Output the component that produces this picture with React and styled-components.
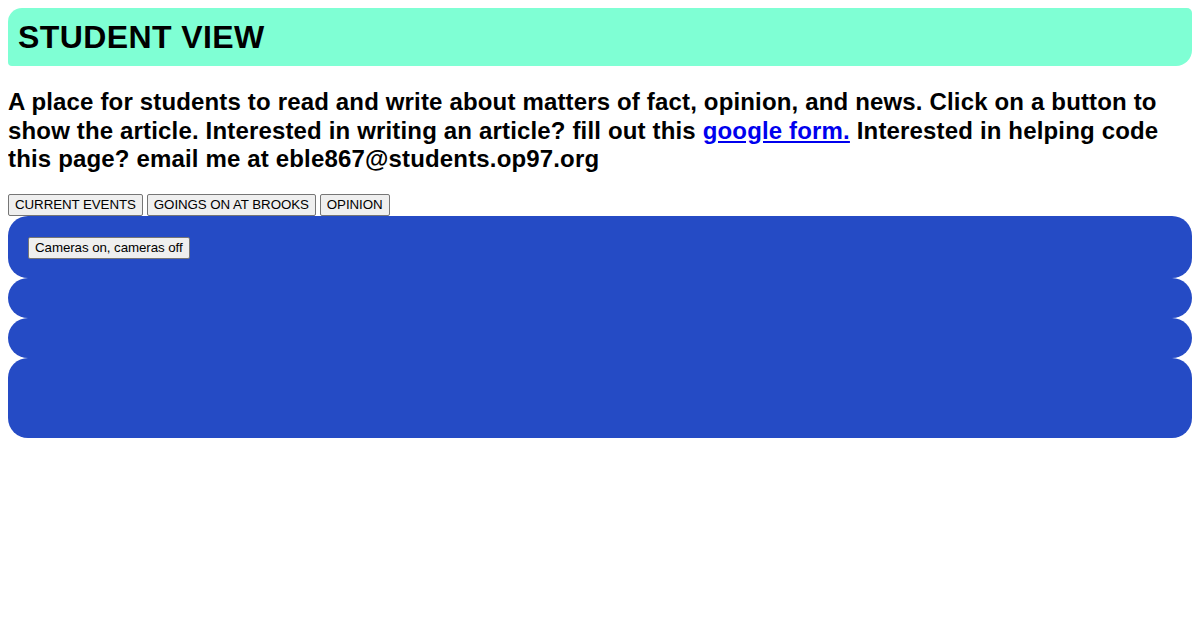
import React, { useState } from 'react'
import styled, { createGlobalStyle } from 'styled-components'

const GlobalStyle = createGlobalStyle`
    body {
        margin: 8px;
        background-color: #FFFFFF;
        font-family: "Liberation Sans", Arial, sans-serif;
        color: #000000;
    }
`

const Header = styled.div`
    background-color: aquamarine;
    border-radius: 14px 5px 16px 4px;
    padding: 10px 10px;
`

const Title = styled.h1`
    margin: 0;
    font-size: 32px;
    font-weight: 700;
    line-height: 38px;
    letter-spacing: 0.4px;
`

const Intro = styled.h2`
    margin: 22px 0 20px;
    font-size: 24px;
    font-weight: 700;
    line-height: 28.5px;
    letter-spacing: 0.16px;

    a {
        color: #0000EE;
        text-decoration: underline;
    }
`

const Tabs = styled.div`
    display: flex;
    gap: 4px;
`

const Button = styled.button`
    font-family: "Liberation Sans", Arial, sans-serif;
    font-size: 13.333px;
    line-height: 16px;
    letter-spacing: -0.08px;
    padding: 2px 6px;
    background-color: #EFEFEF;
    border: 1px solid #767676;
    border-radius: 2px;
    color: #000000;
    cursor: pointer;
`

const Panel = styled.div`
    background-color: #254BC5;
    border-radius: 20px;
    padding: 21px 20px 0;
    height: ${(props) => props.$height}px;
    box-sizing: border-box;
`

const sections = [
    { name: 'CURRENT EVENTS', articles: ['Cameras on, cameras off'] },
    { name: 'GOINGS ON AT BROOKS', articles: [] },
    { name: 'OPINION', articles: [] },
]

const App = () => {
    const [open, setOpen] = useState(0)

    return (
        <>
            <GlobalStyle />
            <Header>
                <Title>STUDENT VIEW</Title>
            </Header>
            <Intro>
                A place for students to read and write about matters of fact, opinion, and news. Click on a
                button to show the article. Interested in writing an article? fill out this{' '}
                <a href="#form">google form.</a> Interested in helping code this page? email me at
                eble867@students.op97.org
            </Intro>
            <Tabs>
                {sections.map((s, i) => (
                    <Button key={s.name} onClick={() => setOpen(i)}>{s.name}</Button>
                ))}
            </Tabs>
            <Panel $height={62}>
                {sections[open].articles.map((a) => (
                    <Button key={a}>{a}</Button>
                ))}
            </Panel>
            <Panel $height={40} />
            <Panel $height={40} />
            <Panel $height={80} />
        </>
    )
}

export default App
